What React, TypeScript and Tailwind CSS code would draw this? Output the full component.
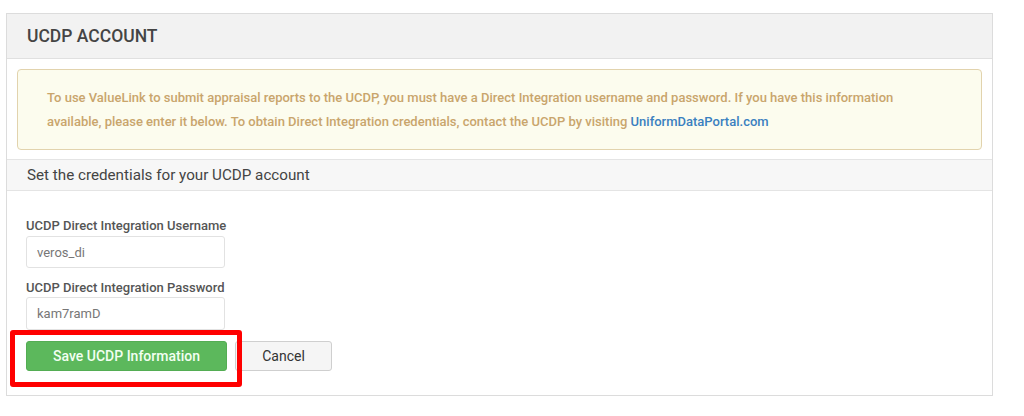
import React from 'react'

export default function App() {
  return (
    <div className="h-[416px] w-[1024px] bg-white pl-[6px] pt-[13px] font-['Roboto',sans-serif]">
      <div className="relative h-[383px] w-[987px] border border-[#dcdcdc] bg-white">
        {/* panel heading */}
        <div className="flex h-[45px] items-center border-b border-[#e0e0e0] bg-[#f2f2f2] pl-[20px]">
          <h2 className="text-[17.5px] font-medium text-[#444]">UCDP ACCOUNT</h2>
        </div>

        {/* warning notice */}
        <div className="mx-[10px] mt-[10px] rounded-[4px] border border-[#e2d3ad] bg-[#fcfcee] pb-[15px] pl-[29px] pr-[44px] pt-[16px] text-[13px] font-medium leading-[24px] text-[#c9a56c]">
          To use ValueLink to submit appraisal reports to the UCDP, you must have a Direct Integration username and password. If you have this information available, please enter it below. To obtain Direct Integration credentials, contact the UCDP by visiting{' '}
          <a href="#" className="text-[#3a80c0]">UniformDataPortal.com</a>
        </div>

        {/* sub heading */}
        <div className="mt-[9px] flex h-[32px] items-center border-y border-[#e4e4e4] bg-[#f7f7f7] pl-[20px]">
          <h3 className="text-[15.2px] text-[#444]">Set the credentials for your UCDP account</h3>
        </div>

        {/* form */}
        <form className="flex flex-col pl-[19px] pt-[27px]">
          <label className="text-[13px] font-medium leading-[16px] text-[#555]">UCDP Direct Integration Username</label>
          <input
            defaultValue="veros_di"
            className="mt-[2px] h-[32px] w-[199px] rounded-[3px] border border-[#e2e2e2] px-[10px] text-[13px] text-[#777] outline-none"
          />
          <label className="mt-[12px] text-[13px] font-medium leading-[16px] text-[#555]">UCDP Direct Integration Password</label>
          <input
            defaultValue="kam7ramD"
            className="mt-[1px] h-[33px] w-[199px] rounded-[3px] border border-[#e2e2e2] px-[10px] text-[13px] text-[#777] outline-none"
          />
          <div className="mt-[11px] flex gap-[8px]">
            <button type="button" className="h-[30px] w-[201px] rounded-[3px] border border-[#53ad53] bg-[#5cb85c] text-[14px] font-medium text-[#f2fff2]">
              Save UCDP Information
            </button>
            <button type="button" className="h-[30px] w-[97px] rounded-[3px] border border-[#cfcfcf] bg-[#f5f5f5] text-[14px] text-[#333]">
              Cancel
            </button>
          </div>
        </form>

        {/* red highlight annotation */}
        <div className="pointer-events-none absolute left-[3px] top-[316px] h-[57px] w-[232px] rounded-[3px] border-[5px] border-[#ff0000]" />
      </div>
    </div>
  )
}
